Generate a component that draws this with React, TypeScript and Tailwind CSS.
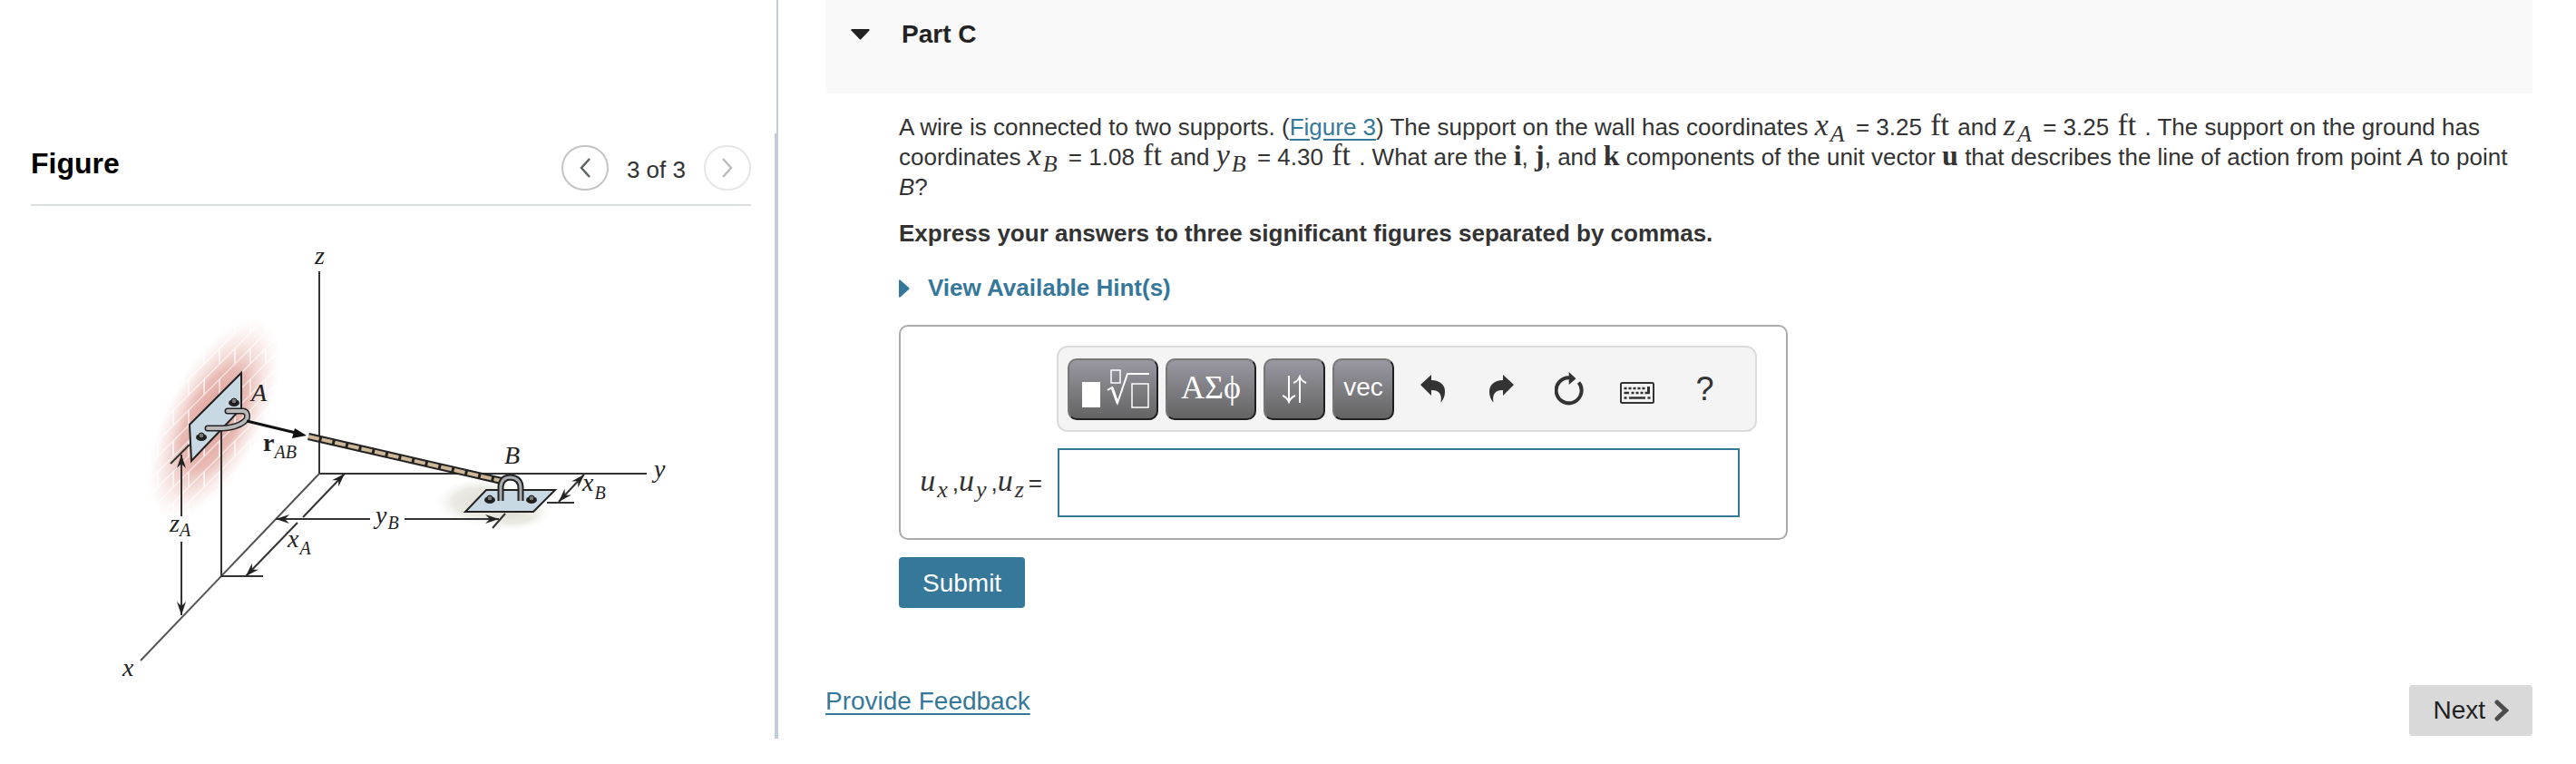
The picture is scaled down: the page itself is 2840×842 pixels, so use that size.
import type { ReactNode } from "react"

const Sym = ({ children, sub }: { children: ReactNode, sub: string }) => {
    return <span className="font-['Liberation_Serif',serif] italic text-[34px] leading-0">
        {children}
        <sub className="text-[26px] leading-0 ml-[2px] mr-[5px]">{sub}</sub>
    </span>
}

const Unit = () => <span className="font-['Liberation_Serif',serif] text-[34px] leading-0 mx-[2px]">ft</span>

const Vec = ({ children }: { children: ReactNode }) => {
    return <b className="font-['Liberation_Serif',serif] text-[32px] leading-0">{children}</b>
}

const keypad = "h-[68px] rounded-[10px] border-2 border-t-[#767676] border-l-[#767676] border-r-[#1f1f1f] border-b-[#1f1f1f] bg-linear-to-b from-[#9a98a2] to-[#646464] text-white flex items-center justify-center"
const tool = "w-[75px] h-[68px] flex items-center justify-center text-[#333]"

const Bolt = ({ x, y }: { x: number, y: number }) => {
    return <g>
        <ellipse cx={x} cy={y} rx="6" ry="4" fill="#222" />
        <ellipse cx={x} cy={y - 2} rx="3" ry="3" fill="#777" stroke="#111" />
    </g>
}

const WireDiagram = () => {
    return <svg
        viewBox="120 260 640 500"
        className="block w-[640px] max-w-full"
        role="img"
        aria-label="Wire from support A on the wall to support B on the ground"
    >
        <defs>
            <radialGradient id="wall">
                <stop offset="0" stopColor="#dd9a92" />
                <stop offset="0.5" stopColor="#e6b3ac" stopOpacity="0.9" />
                <stop offset="1" stopColor="#f6e0dc" stopOpacity="0" />
            </radialGradient>
            <radialGradient id="ground">
                <stop offset="0" stopColor="#deded5" />
                <stop offset="0.6" stopColor="#e6e6de" stopOpacity="0.8" />
                <stop offset="1" stopColor="#f3f3ee" stopOpacity="0" />
            </radialGradient>
            <pattern id="bricks" width="34" height="34" patternUnits="userSpaceOnUse" patternTransform="translate(3 10) skewY(-45)">
                <path d="M0 1H34M0 18H34M1 1V18M18 18V34" stroke="#fff" strokeWidth="1.5" fill="none" opacity="0.8" />
            </pattern>
            <marker id="tip" viewBox="0 0 16 12" refX="15" refY="6" markerWidth="16" markerHeight="12" markerUnits="userSpaceOnUse" orient="auto-start-reverse">
                <path d="M0 1L15 6L0 11L5 6Z" fill="#222" />
            </marker>
        </defs>

        <g transform="rotate(-63 236 462)">
            <ellipse cx="236" cy="462" rx="122" ry="54" fill="url(#wall)" />
        </g>
        <path d="M236 330L310 340L310 470L220 580L160 580L160 460Z" fill="url(#bricks)" />
        <ellipse cx="530" cy="553" rx="50" ry="26" fill="url(#ground)" />
        <ellipse cx="565" cy="565" rx="42" ry="20" fill="url(#ground)" />

        {/* axes */}
        <g stroke="#333" strokeWidth="2" fill="none">
            <path d="M352 299V522H713" />
            <path d="M352 522L155 728" stroke="#555" />
            <path d="M244 472V635H290" />
            <path d="M603 554H633" />
            <path d="M209 490L188 511" />
            <path d="M557 566L543 582" />
        </g>

        {/* dimensions */}
        <g stroke="#333" strokeWidth="2" fill="none">
            <path d="M200 569V501" markerEnd="url(#tip)" />
            <path d="M200 597V678" markerEnd="url(#tip)" />
            <path d="M334 570L380 522" markerEnd="url(#tip)" />
            <path d="M328 576L271 635" markerEnd="url(#tip)" />
            <path d="M408 572H304" markerEnd="url(#tip)" />
            <path d="M446 572H550" markerEnd="url(#tip)" />
            <path d="M616 553L644 523" markerStart="url(#tip)" markerEnd="url(#tip)" />
        </g>

        {/* support A */}
        <path d="M209 468L266 411V450L250 467L211 508Z" fill="#c9d9e4" stroke="#222" strokeWidth="2" />
        <Bolt x={222} y={482} />
        <Bolt x={258} y={444} />
        <path d="M251 453H268Q274 454 272 462Q264 471 246 472H229" fill="none" stroke="#222" strokeWidth="7" strokeLinecap="round" />
        <path d="M251 453H268Q274 454 272 462Q264 471 246 472H229" fill="none" stroke="#b9b9b9" strokeWidth="4" strokeLinecap="round" />
        <path d="M272 464L326 477" stroke="#111" strokeWidth="3" />
        <path d="M338 480L325 472L322 483Z" fill="#111" />

        {/* support B */}
        <path d="M536 540H612L588 564H513Z" fill="#c9d9e4" stroke="#222" strokeWidth="2" />
        <Bolt x={540} y={551} />
        <Bolt x={586} y={551} />
        <path d="M340 481L553 530" stroke="#222" strokeWidth="8" />
        <path d="M340 481L553 530" stroke="#cdb797" strokeWidth="4" strokeDasharray="12 3" />
        <path d="M552 552V536Q553 526 563 526Q574 527 574 538V552" fill="none" stroke="#222" strokeWidth="7" />
        <path d="M552 552V536Q553 526 563 526Q574 527 574 538V552" fill="none" stroke="#a9adb0" strokeWidth="3" />

        <g fontFamily="Liberation Serif, serif" fontStyle="italic" fontSize="28" fill="#222">
            <text x="347" y="291">z</text>
            <text x="277" y="442">A</text>
            <text x="556" y="511">B</text>
            <text x="721" y="526">y</text>
            <text x="135" y="745">x</text>
            <text x="187" y="586">z<tspan dy="5" fontSize="20">A</tspan></text>
            <text x="317" y="603">x<tspan dx="1" dy="8" fontSize="20">A</tspan></text>
            <text x="414" y="577">y<tspan dx="1" dy="6" fontSize="20">B</tspan></text>
            <text x="642" y="541">x<tspan dx="1" dy="9" fontSize="20">B</tspan></text>
            <text x="290" y="497" fontStyle="normal" fontWeight="bold">r<tspan dy="8" fontSize="20" fontStyle="italic" fontWeight="normal">AB</tspan></text>
        </g>
    </svg>
}

const FigurePanel = () => {
    return <aside className="flex flex-col">
        <div className="h-[147px] border-r-2 border-[#bfccdb]" />
        <div className="border-r-4 border-[#bfccdb] pl-[34px] pr-[26px] pt-[13px] pb-[54px]">
            <div className="flex items-center justify-between border-b-2 border-[#dcdfe0] pb-[15px]">
                <h2 className="text-[32px] leading-10 pb-[10px] font-bold text-black">Figure</h2>
                <div className="flex items-center gap-5">
                    <button aria-label="Previous figure" className="w-[52px] h-[50px] rounded-full border-2 border-[#c4c4c4] flex items-center justify-center">
                        <svg width="14" height="22" viewBox="0 0 14 22" fill="none" stroke="#5c6363" strokeWidth="2.5"><path d="M12 1L3 11L12 21" /></svg>
                    </button>
                    <span className="text-[26px] leading-8 pt-1">3 of 3</span>
                    <button disabled aria-label="Next figure" className="w-[52px] h-[50px] rounded-full border-2 border-[#e6e6e6] flex items-center justify-center">
                        <svg width="14" height="22" viewBox="0 0 14 22" fill="none" stroke="#bcbcbc" strokeWidth="2.5"><path d="M2 1L11 11L2 21" /></svg>
                    </button>
                </div>
            </div>
            <div className="mt-[33px] pl-[86px]">
                <WireDiagram />
            </div>
        </div>
    </aside>
}

const Toolbar = () => {
    return <div className="flex items-center h-[95px] pl-[10px] border-2 border-[#dcdcdc] rounded-xl bg-[#f4f4f4]">
        <div className="flex gap-2 mr-[5px]">
            <button aria-label="Templates" className={`${keypad} w-[100px]`}>
                <svg width="96" height="64" viewBox="0 0 96 64" fill="none" stroke="#fff" strokeWidth="2">
                    <rect x="14" y="24" width="20" height="28" fill="#fff" stroke="none" />
                    <rect x="46" y="11" width="10" height="14" strokeWidth="1.5" />
                    <path d="M42 33L47 30L53 47L64 15H88" />
                    <path d="M47 30L53 47" strokeWidth="3" />
                    <rect x="69" y="26" width="18" height="26" strokeWidth="1.5" />
                </svg>
            </button>
            <button aria-label="Symbols" className={`${keypad} w-[100px] font-['Liberation_Serif',serif] text-[36px] leading-none pb-1`}>ΑΣϕ</button>
            <button aria-label="Subscript and superscript" className={`${keypad} w-[68px]`}>
                <svg width="28" height="32" viewBox="0 0 28 32" fill="none" stroke="#fff" strokeWidth="2">
                    <path d="M8 1V30M1 23Q6 25 8 30Q10 25 15 23M20 31V2M13 9Q18 7 20 2Q22 7 27 9" />
                </svg>
            </button>
            <button className={`${keypad} w-[68px] text-[28px] leading-none pb-1`}>vec</button>
        </div>
        <button aria-label="Undo" className={tool}>
            <svg width="28" height="31" viewBox="0 0 28 31" fill="currentColor">
                <path d="M0 11L12 0V6C22 6 27 12 27 18C27 24 25 28 22.5 30.5C24 22 21 16.5 12 17V23Z" />
            </svg>
        </button>
        <button aria-label="Redo" className={tool}>
            <svg width="28" height="31" viewBox="0 0 28 31" fill="currentColor">
                <path d="M28 11L16 0V6C6 6 1 12 1 18C1 24 3 28 5.5 30.5C4 22 7 16.5 16 17V23Z" />
            </svg>
        </button>
        <button aria-label="Reset" className={tool}>
            <svg width="32" height="37" viewBox="0 0 32 37" fill="none">
                <path d="M26.5 11.5A14 14 0 1 1 16 6.3" stroke="currentColor" strokeWidth="4" />
                <path d="M15.7 0L23.5 7.3L15.7 14Z" fill="currentColor" />
            </svg>
        </button>
        <button aria-label="Keyboard shortcuts" className={`${tool} pt-2`}>
            <svg width="40" height="24" viewBox="0 0 40 24" fill="none" stroke="currentColor">
                <rect x="2" y="1" width="36" height="22" rx="1.5" strokeWidth="2" />
                <path d="M5.5 7H8.5M10.5 7H13.5M15.5 7H18.5M20.5 7H23.5M25.5 7H28.5M5.5 12H11M13.5 12H16.5M18.5 12H21.5M23.5 12H26.5M28.5 12H33.5M5.5 17.5H8.5M11 17.5H29M31.5 17.5H34.5" strokeWidth="2.5" />
                <path d="M32.5 5V13" strokeWidth="3" />
            </svg>
        </button>
        <button aria-label="Help" className={`${tool} text-[36px] leading-none`}>?</button>
    </div>
}

const AnswerBox = () => {
    return <div className="mt-6 max-w-[980px] border-2 border-[#aaa] rounded-[10px] pt-[21px] pb-[23px] pr-8 grid grid-cols-[172px_1fr] gap-y-[18px]">
        <div className="col-start-2">
            <Toolbar />
        </div>
        <label htmlFor="answer" className="self-center pr-4 text-right text-[26px] leading-8 whitespace-nowrap">
            <Sym sub="x">u</Sym>,<Sym sub="y">u</Sym>,<Sym sub="z">u</Sym>=
        </label>
        <input id="answer" type="text" className="ml-px mr-[19px] h-[76px] border-2 border-[#36789a] bg-white px-3 text-[26px] outline-none" />
    </div>
}

const App = () => {
    return <div className="grid grid-cols-[429fr_991fr] items-start bg-white font-['Liberation_Sans',Arial,sans-serif] text-[#333]">
        <FigurePanel />
        <main className="pl-[52px] pr-12">
            <header className="flex items-start bg-[#f9f9f9] pt-5 pb-[47px] pl-7">
                <button aria-label="Collapse part" className="h-9 w-14 flex items-center">
                    <svg width="21" height="12" viewBox="0 0 21 12" fill="#222"><path d="M1 0H20Q21.5 1 20 2L11.5 11Q10.5 12 9.5 11L1 2Q-0.5 1 1 0Z" /></svg>
                </button>
                <h1 className="text-[28px] leading-9 font-bold text-[#222]">Part C</h1>
            </header>
            <section className="pl-[81px] pt-[21px] text-[26px] leading-[33px]">
                <p>
                    A wire is connected to two supports. (<a href="#figure-3" className="text-[#36789a] underline underline-offset-4">Figure 3</a>) The support on the wall has coordinates <Sym sub="A">x</Sym> = 3.25 <Unit /> and <Sym sub="A">z</Sym> = 3.25 <Unit /> . The support on the ground has coordinates <Sym sub="B">x</Sym> = 1.08 <Unit /> and <Sym sub="B">y</Sym> = 4.30 <Unit /> . What are the <Vec>i</Vec>, <Vec>j</Vec>, and <Vec>k</Vec> components of the unit vector <Vec>u</Vec> that describes the line of action from point <i>A</i> to point <i>B</i>?
                </p>
                <p className="mt-[18px] font-bold">Express your answers to three significant figures separated by commas.</p>
                <button className="mt-[27px] flex items-center gap-5 font-bold text-[#36789a]">
                    <svg width="12" height="20" viewBox="0 0 12 20" fill="currentColor"><path d="M0 1Q1 -0.5 2 1L11 9Q12 10 11 11L2 19Q1 20.5 0 19Z" /></svg>
                    View Available Hint(s)
                </button>
                <AnswerBox />
                <button className="mt-[19px] block h-14 px-[26px] rounded bg-[#36789a] text-white text-[28px]">Submit</button>
            </section>
            <footer className="mt-[85px] flex items-start justify-between text-[28px] leading-9">
                <a href="#feedback" className="text-[#36789a] underline underline-offset-4">Provide Feedback</a>
                <button className="flex items-center gap-[10px] h-14 px-[26px] rounded bg-[#d9d9d9] text-[#222]">
                    Next
                    <svg width="16" height="24" viewBox="0 0 16 24" fill="none" stroke="#4d4d4d" strokeWidth="5" strokeLinecap="round"><path d="M3 3L12.5 12L3 21" /></svg>
                </button>
            </footer>
        </main>
    </div>
}

export default App
